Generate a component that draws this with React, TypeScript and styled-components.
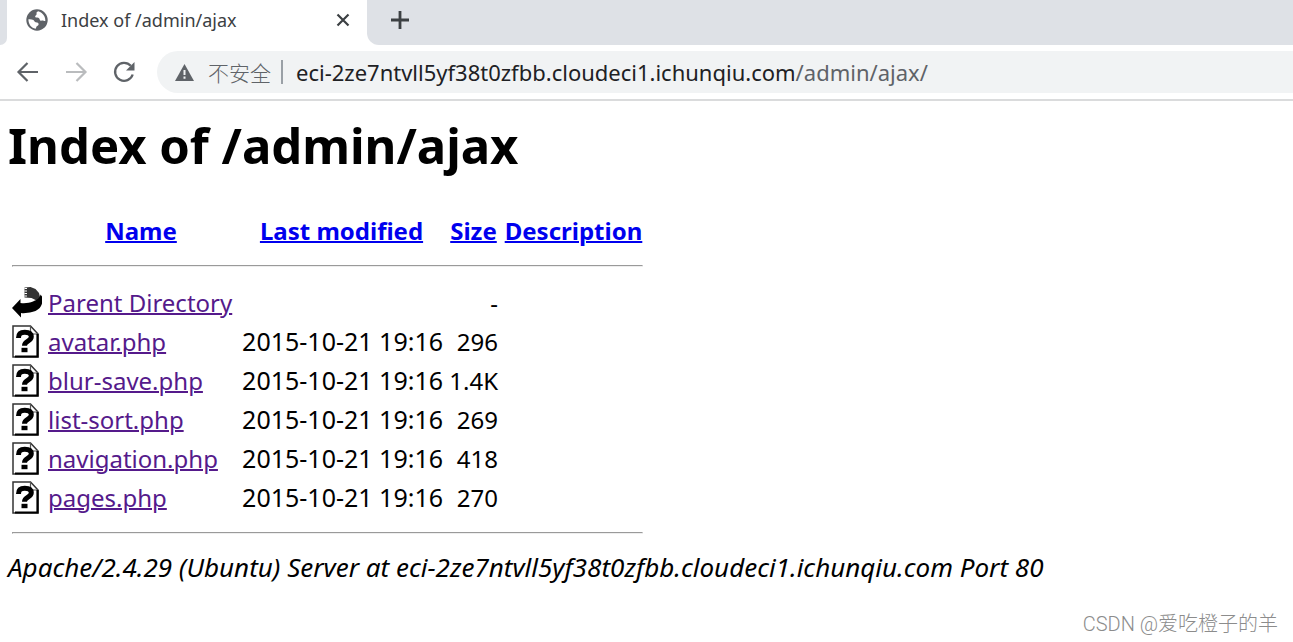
import React from "react";
import styled, { createGlobalStyle } from "styled-components";

const GlobalStyle = createGlobalStyle`
  body {
    margin: 0;
    background: #fff;
    color: #000;
    font-family: "Noto Sans", "Noto Sans CJK SC", sans-serif;
  }
`;

const TabStrip = styled.div`
  display: flex;
  height: 45px;
  background: #fff;
`;

const StripEdge = styled.div`
  width: 7px;
  background: #dee1e6;
  border-bottom-right-radius: 10px;
`;

const Tab = styled.div`
  display: flex;
  align-items: center;
  box-sizing: border-box;
  width: 360px;
  padding: 0 17px 6px 19px;
  background: #fff;
`;

const TabTitle = styled.span`
  flex: 1;
  margin-left: 13px;
  font-size: 18px;
  line-height: 26px;
  color: #3c4043;
  white-space: nowrap;
`;

const StripRest = styled.div`
  display: flex;
  flex: 1;
  align-items: center;
  padding: 0 0 6px 23px;
  background: #dee1e6;
  border-bottom-left-radius: 12px;
`;

const IconButton = styled.button`
  display: flex;
  padding: 0;
  border: 0;
  background: none;
`;

const Toolbar = styled.div`
  display: flex;
  align-items: center;
  gap: 24px;
  height: 54px;
  padding-left: 16px;
  border-bottom: 2px solid #dadbdc;
`;

const AddressBar = styled.div`
  display: flex;
  flex: 1;
  align-items: center;
  box-sizing: border-box;
  height: 42px;
  margin-left: -3px;
  padding-left: 18px;
  background: #f1f3f4;
  border-radius: 21px 0 0 21px;
`;

const Security = styled.span`
  margin-left: 14px;
  padding-right: 10px;
  border-right: 2px solid #9aa0a6;
  font-family: "Noto Sans CJK SC", sans-serif;
  font-size: 21px;
  font-weight: 300;
  line-height: 24px;
  color: #5f6368;
`;

const Url = styled.span`
  margin-left: 13px;
  font-size: 22px;
  line-height: 30px;
  color: #202124;
  white-space: nowrap;
`;

const UrlPath = styled.span`
  color: #5f6368;
`;

const Page = styled.main`
  padding: 0 8px;
  font-size: 24px;
  line-height: 33px;
`;

const Heading = styled.h1`
  margin: 10px 0 31px;
  font-size: 49px;
  line-height: 68px;
`;

const Listing = styled.table`
  border-spacing: 2px;
  table-layout: fixed;
  width: 639px;

  th,
  td {
    padding: 2px;
    white-space: nowrap;
  }
`;

const Column = styled.col<{ $width: number }>`
  width: ${(p) => p.$width}px;
`;

const NumberCell = styled.td`
  text-align: right;
`;

const DateCell = styled(NumberCell)`
  font-size: 25px;
`;

const IconCell = styled.td`
  svg {
    display: block;
  }
`;

const HeadLink = styled.a`
  color: #0000ee;
  text-decoration-thickness: 2px;
`;

const FileLink = styled.a`
  color: #551a8b;
  text-decoration-thickness: 2px;
`;

const Rule = styled.hr`
  margin: 12px 0 13px;
  border: 1px solid;
  border-color: #9a9a9a #eee #eee #9a9a9a;
`;

const Address = styled.address`
  font-size: 26px;
  white-space: nowrap;
`;

const Watermark = styled.footer`
  padding: 26px 15px 5px 0;
  text-align: right;
  font-family: Roboto, "Noto Sans CJK SC", sans-serif;
  font-size: 20px;
  font-weight: 300;
  line-height: 28px;
  color: #8c8c8c;
`;

const Globe = () => (
  <svg width="22" height="22" viewBox="0 0 22 22" aria-hidden="true">
    <circle cx="11" cy="11" r="10.7" fill="#5f6368" />
    <path
      d="M12.2 2.3c-1.3.4-2 1.2-1.6 2.4.3 1-.9 1.5-1.3 2.2-.6 1.1.6 1.7 1.8 1.6 1.6-.1 2.5 1 2.7 2.2.2 1.1 1.5 1 2.5.8 1-.2 1.6.8 3 .5.2-3.7-1.6-7.7-7.1-9.7zM2.4 10.2c2.2-.2 3.7.1 5 .9 1.3.8.7 1.9 2.2 2.1 2 .2 3.2.7 3 2.2-.2 1.4-1.8 1.3-2.2 2.3-.3.8-.2 1.5-.8 2-4.2-.7-7.2-4.4-7.2-9.5z"
      fill="#fff"
    />
  </svg>
);

const Close = () => (
  <svg width="14" height="14" viewBox="0 0 14 14" aria-hidden="true">
    <path d="M1.5 1.5l11 11m0-11l-11 11" stroke="#3c4043" strokeWidth="2.2" />
  </svg>
);

const Plus = () => (
  <svg width="20" height="20" viewBox="0 0 20 20" aria-hidden="true">
    <path d="M10 1v18M1 10h18" stroke="#3c4043" strokeWidth="2.8" />
  </svg>
);

const Arrow = ({ color, forward }: { color: string; forward?: boolean }) => (
  <svg width="24" height="24" viewBox="0 0 24 24" aria-hidden="true">
    <path
      d={forward ? "M2 12h19M12.5 3l9 9-9 9" : "M22 12H3M11.5 3l-9 9 9 9"}
      fill="none"
      stroke={color}
      strokeWidth="2.2"
    />
  </svg>
);

const Reload = () => (
  <svg width="24" height="24" viewBox="0 0 24 24" aria-hidden="true">
    <path d="M18.8 5.8A9 9 0 1 0 20.7 14.5" fill="none" stroke="#5f6368" strokeWidth="2.3" />
    <path d="M22.5 2v8.5H14z" fill="#5f6368" />
  </svg>
);

const Warning = () => (
  <svg width="19" height="17" viewBox="0 0 19 17" aria-hidden="true">
    <path d="M9.5 0L19 17H0z" fill="#5f6368" />
    <path d="M9.5 6v5M9.5 12.5v2.2" stroke="#f1f3f4" strokeWidth="2" />
  </svg>
);

const BackIcon = () => (
  <svg width="30" height="33" viewBox="0 0 30 33" role="img" aria-label="[PARENTDIR]">
    <path d="M12.5 1.500l6-.5 5 2 3.500 4 1.500 6-4 1.500-5-2.500-7-.5z" fill="#333" />
    <path d="M12.500 2.500h2.500M12.500 5h2.500M12.500 7.500h2.500M12.500 10h2.500" stroke="#fff" strokeWidth="1" />
    <path
      d="M28.500 8.500l1.500 2v7c-1 4.500-5 7.500-10 8.500-3.500.8-7.500 1.500-11 1v4.500L0 22 8.500 13v4c4.500.5 9 0 12.500-1.500 4-1.800 7-3.500 7.500-7z"
      fill="#000"
    />
  </svg>
);

const UnknownIcon = () => (
  <svg width="27" height="33" viewBox="0 0 27 33" role="img" aria-label="[   ]">
    <path d="M1 1h17.500l7.500 8v23H1z" fill="#fff" stroke="#333" strokeWidth="1.5" />
    <path d="M18.500 1v8H26" fill="none" stroke="#555" strokeWidth="1.2" />
    <path d="M25.500 9v22.500H3" fill="none" stroke="#000" strokeWidth="2.2" />
    <path
      d="M6.500 13c0-4.200 2-5.700 6.300-5.700 4.500 0 6.500 1.700 6.500 4.500 0 4.800-6.800 4-6.800 9"
      fill="none"
      stroke="#000"
      strokeWidth="5"
    />
    <path d="M9.500 22.800h6v4.400h-6z" fill="#000" />
  </svg>
);

const files = [
  { name: "avatar.php", modified: "2015-10-21 19:16", size: "296" },
  { name: "blur-save.php", modified: "2015-10-21 19:16", size: "1.4K" },
  { name: "list-sort.php", modified: "2015-10-21 19:16", size: "269" },
  { name: "navigation.php", modified: "2015-10-21 19:16", size: "418" },
  { name: "pages.php", modified: "2015-10-21 19:16", size: "270" },
];

const columnWidths = [34, 190, 207, 53, 143];
const headings = ["Name", "Last modified", "Size", "Description"];

export default function App() {
  return (
    <>
      <GlobalStyle />
      <header>
        <TabStrip>
          <StripEdge />
          <Tab>
            <Globe />
            <TabTitle>Index of /admin/ajax</TabTitle>
            <IconButton aria-label="Close tab"><Close /></IconButton>
          </Tab>
          <StripRest>
            <IconButton aria-label="New tab"><Plus /></IconButton>
          </StripRest>
        </TabStrip>
        <Toolbar>
          <IconButton aria-label="Back"><Arrow color="#5f6368" /></IconButton>
          <IconButton aria-label="Forward"><Arrow color="#babcbe" forward /></IconButton>
          <IconButton aria-label="Reload"><Reload /></IconButton>
          <AddressBar>
            <Warning />
            <Security>不安全</Security>
            <Url>
              eci-2ze7ntvll5yf38t0zfbb.cloudeci1.ichunqiu.com<UrlPath>/admin/ajax/</UrlPath>
            </Url>
          </AddressBar>
        </Toolbar>
      </header>
      <Page>
        <Heading>Index of /admin/ajax</Heading>
        <Listing>
          <colgroup>
            {columnWidths.map((width, i) => (
              <Column key={i} $width={width} />
            ))}
          </colgroup>
          <tbody>
            <tr>
              <td />
              {headings.map((label) => (
                <th key={label} scope="col"><HeadLink href="#">{label}</HeadLink></th>
              ))}
            </tr>
            <tr>
              <td colSpan={5}><Rule /></td>
            </tr>
            <tr>
              <IconCell><BackIcon /></IconCell>
              <td><FileLink href="#">Parent Directory</FileLink></td>
              <td />
              <NumberCell>-</NumberCell>
              <td />
            </tr>
            {files.map((file) => (
              <tr key={file.name}>
                <IconCell><UnknownIcon /></IconCell>
                <td><FileLink href="#">{file.name}</FileLink></td>
                <DateCell>{file.modified}</DateCell>
                <NumberCell>{file.size}</NumberCell>
                <td />
              </tr>
            ))}
            <tr>
              <td colSpan={5}><Rule /></td>
            </tr>
          </tbody>
        </Listing>
        <Address>Apache/2.4.29 (Ubuntu) Server at eci-2ze7ntvll5yf38t0zfbb.cloudeci1.ichunqiu.com Port 80</Address>
      </Page>
      <Watermark>CSDN @爱吃橙子的羊</Watermark>
    </>
  );
}
